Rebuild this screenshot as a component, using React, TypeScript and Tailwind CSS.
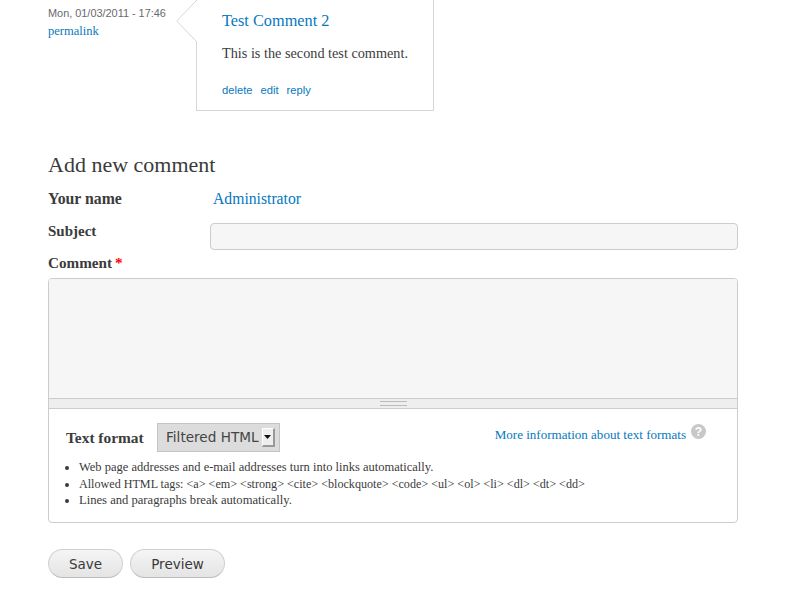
const serif = "font-['Liberation_Serif',serif]";
const linkColor = "text-[#0678be]";

function CommentArrow() {
    return (
        <svg className="absolute left-[-21px] top-0" width="22" height="43" viewBox="0 0 22 43">
            <path d="M21 0 L0.7 21 L21 42 L21 43 L22 43 L22 0 Z" fill="#fff" />
            <path d="M21 0 L0.7 21 L21 42" fill="none" stroke="#d3d7d9" strokeWidth="1" />
        </svg>
    );
}

function CommentRow() {
    return (
        <div className="flex h-[111px]">
            <div className="w-[148px] pt-[7px]">
                <div className="font-['Liberation_Sans',sans-serif] text-[10.9px] leading-[13px] text-[#68696b]">
                    Mon, 01/03/2011 - 17:46
                </div>
                <a className={`block mt-[4px] text-[12.5px] leading-[15px] ${serif} ${linkColor}`}>permalink</a>
            </div>
            <div className="relative w-[238px] border-r border-b border-l border-[#d3d7d9] pl-[25px]">
                <CommentArrow />
                <h3 className={`mt-[10px] text-[16.3px] leading-[22px] ${serif} ${linkColor}`}>Test Comment 2</h3>
                <p className={`mt-[11px] text-[14.25px] leading-[20px] text-[#3b3b3b] ${serif}`}>
                    This is the second test comment.
                </p>
                <div className={`mt-[20px] flex gap-[8px] font-['Liberation_Sans',sans-serif] text-[11.2px] leading-[14px] ${linkColor}`}>
                    <a>delete</a>
                    <a>edit</a>
                    <a>reply</a>
                </div>
            </div>
        </div>
    );
}

function FilterSelect() {
    return (
        <div className="flex h-[29px] w-[123px] items-center border border-[#c4c4c4] bg-[#dcdcdc] pl-[8px] font-['DejaVu_Sans',sans-serif] text-[13.6px] text-[#444]">
            <span>Filtered HTML</span>
            <span className="ml-[3px] flex h-[19px] w-[13px] items-center justify-center border-t border-l border-t-white border-l-white border-r-2 border-b-2 border-r-[#999] border-b-[#999] bg-[#eee]">
                <svg width="7" height="4" viewBox="0 0 7 4"><path d="M0 0 H7 L3.5 4 Z" fill="#111" /></svg>
            </span>
        </div>
    );
}

function Guidelines() {
    return (
        <ul className={`mt-[7px] ml-[30px] list-disc text-[12.5px] leading-[16.5px] text-[#3b3b3b] ${serif}`}>
            <li>Web page addresses and e-mail addresses turn into links automatically.</li>
            <li className="text-[12.12px]">
                {"Allowed HTML tags: <a> <em> <strong> <cite> <blockquote> <code> <ul> <ol> <li> <dl> <dt> <dd>"}
            </li>
            <li className="text-[12.6px]">Lines and paragraphs break automatically.</li>
        </ul>
    );
}

function PillButton({ label, width }: { label: string; width: string }) {
    return (
        <button className={`h-[29px] ${width} rounded-[15px] border border-[#d0d0d0] border-b-[#bbb] bg-gradient-to-b from-[#f5f5f5] to-[#e4e4e4] pt-[1px] font-['DejaVu_Sans',sans-serif] text-[13.5px] text-[#3a3a3a]`}>
            {label}
        </button>
    );
}

export default function App() {
    return (
        <div className="h-[607px] w-[794px] overflow-hidden bg-white pr-[56px] pl-[48px]">
            <CommentRow />

            <h2 className={`mt-[41px] text-[22px] leading-[26px] text-[#3b3b3b] ${serif}`}>Add new comment</h2>

            <div className={`mt-[8px] flex h-[25px] items-center ${serif}`}>
                <label className="w-[165px] text-[15.8px] font-bold text-[#3b3b3b]">Your name</label>
                <a className={`text-[15.7px] ${linkColor}`}>Administrator</a>
            </div>

            <div className="mt-[12px] flex">
                <label className={`w-[162px] text-[15px] leading-[17px] font-bold text-[#3b3b3b] ${serif}`}>Subject</label>
                <div className="h-[27px] flex-1 rounded-[4px] border border-[#ccc] bg-[#f6f6f6]" />
            </div>

            <label className={`mt-[4px] flex h-[18px] gap-[3px] text-[15.2px] leading-[17px] font-bold text-[#3b3b3b] ${serif}`}>
                <span>Comment</span>
                <span className="text-[#f00]">*</span>
            </label>

            <div className="mt-[6px] h-[245px] overflow-hidden rounded-[4px] border border-[#ccc]">
                <div className="h-[119px] bg-[#f6f6f6]" />
                <div className="flex h-[11px] items-center justify-center border-t border-b border-[#ccc] bg-[#eee]">
                    <div className="h-[5px] w-[27px] border-t border-b border-[#bbb]" />
                </div>
                <div className="relative pt-[14px]">
                    <div className="flex items-center pl-[17px]">
                        <label className={`w-[91px] text-[15.4px] font-bold text-[#3b3b3b] ${serif}`}>Text format</label>
                        <FilterSelect />
                    </div>
                    <div className={`absolute top-[15px] right-[31px] flex items-center gap-[5px] text-[13.05px] leading-[20px] ${serif} ${linkColor}`}>
                        <a>More information about text formats</a>
                        <span className="mb-[6px] flex h-[15px] w-[15px] items-center justify-center rounded-full bg-[#c8c8c8] font-['Liberation_Sans',sans-serif] text-[12px] font-bold text-white">?</span>
                    </div>
                    <Guidelines />
                </div>
            </div>

            <div className="mt-[26px] flex gap-[7px]">
                <PillButton label="Save" width="w-[75px]" />
                <PillButton label="Preview" width="w-[95px]" />
            </div>
        </div>
    );
}
